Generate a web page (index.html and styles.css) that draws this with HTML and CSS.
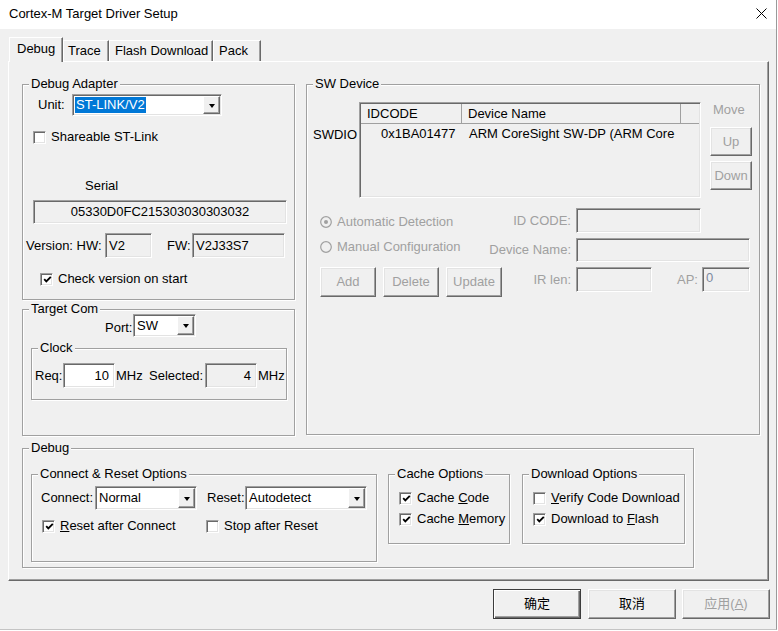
FILE: index.html
```html
<!DOCTYPE html>
<html>
<head>
<meta charset="utf-8">
<title>Cortex-M Target Driver Setup</title>
<link rel="stylesheet" href="styles.css">
</head>
<body>
<div class="window">
  <div class="titlebar">
    <span class="title">Cortex-M Target Driver Setup</span>
    <svg class="close" width="11" height="11" viewBox="0 0 11 11"><path d="M0.5 0.5L10.5 10.5M10.5 0.5L0.5 10.5" stroke="#000" stroke-width="1" fill="none"/></svg>
  </div>

  <div class="tabs">
    <div class="tab active t-debug">Debug</div>
    <div class="tab t-trace">Trace</div>
    <div class="tab t-flash">Flash Download</div>
    <div class="tab t-pack">Pack</div>
  </div>

  <div class="panel">
    <div class="top-row">
      <div class="left-col">
        <fieldset class="grp adapter">
          <legend>Debug Adapter</legend>
          <div class="unit-row">
            <span class="lbl-unit">Unit:</span>
            <div class="combo c-unit"><span class="val sel-wrap"><span class="sel">ST-LINK/V2</span></span><span class="arrow"></span></div>
          </div>
          <div class="chk share-row"><span class="box"></span><span>Shareable ST-Link</span></div>
          <div class="serial-lbl">Serial</div>
          <div class="edit serial-box">05330D0FC215303030303032</div>
          <div class="version-row">
            <span class="lbl-ver">Version: HW:</span>
            <div class="edit ver-hw">V2</div>
            <span class="lbl-fw">FW:</span>
            <div class="edit ver-fw">V2J33S7</div>
          </div>
          <div class="chk checkver-row"><span class="box"><svg width="9" height="9" viewBox="0 0 9 9"><path d="M1.2 4.2L3.3 6.3L7.8 1.8" stroke="#000" stroke-width="1.9" fill="none"/></svg></span><span>Check version on start</span></div>
        </fieldset>

        <fieldset class="grp target">
          <legend>Target Com</legend>
          <div class="port-row">
            <span class="lbl-port">Port:</span>
            <div class="combo c-port"><span class="val">SW</span><span class="arrow"></span></div>
          </div>
          <fieldset class="grp clock">
            <legend>Clock</legend>
            <div class="req-row">
              <span class="lbl-req">Req:</span>
              <div class="edit white num-box">10</div>
              <span class="mhz1">MHz</span>
              <span class="lbl-selected">Selected:</span>
              <div class="edit num-box">4</div>
              <span class="mhz2">MHz</span>
            </div>
          </fieldset>
        </fieldset>
      </div>

      <fieldset class="grp swdev">
        <legend>SW Device</legend>
        <div class="sw-top">
          <span class="swdio">SWDIO</span>
          <div class="list">
            <div class="list-head">
              <span class="hc hc-id">IDCODE</span>
              <span class="hc hc-name">Device Name</span>
              <span class="hc hc-fill"></span>
            </div>
            <div class="list-row">
              <span class="lc-id">0x1BA01477</span>
              <span class="lc-name">ARM CoreSight SW-DP (ARM Core</span>
            </div>
          </div>
          <div class="move-col">
            <span class="move-lbl">Move</span>
            <div class="btn dis b-up">Up</div>
            <div class="btn dis b-down">Down</div>
          </div>
        </div>
        <div class="sw-bottom">
          <div class="sw-left">
            <div class="radio r1"><svg width="12" height="12" viewBox="0 0 12 12"><circle cx="6" cy="6" r="5.3" fill="#f0f0f0" stroke="#a0a0a0" stroke-width="1.2"/><circle cx="6" cy="6" r="2" fill="#a0a0a0"/></svg><span>Automatic Detection</span></div>
            <div class="radio r2"><svg width="12" height="12" viewBox="0 0 12 12"><circle cx="6" cy="6" r="5.3" fill="#f0f0f0" stroke="#a0a0a0" stroke-width="1.2"/></svg><span>Manual Configuration</span></div>
            <div class="sw-btns">
              <div class="btn dis b-sm">Add</div>
              <div class="btn dis b-sm">Delete</div>
              <div class="btn dis b-sm">Update</div>
            </div>
          </div>
          <div class="sw-right">
            <div class="f-row fr1"><span class="f-lbl"><span>ID CODE:</span></span><div class="edit in-id"></div></div>
            <div class="f-row fr2"><span class="f-lbl"><span>Device Name:</span></span><div class="edit in-name"></div></div>
            <div class="f-row fr3"><span class="f-lbl"><span>IR len:</span></span><div class="edit in-ir"></div><span class="ap-lbl">AP:</span><div class="edit in-ap">0</div></div>
          </div>
        </div>
      </fieldset>
    </div>

    <fieldset class="grp debug">
      <legend>Debug</legend>
      <div class="debug-row">
        <fieldset class="grp conn">
          <legend>Connect &amp; Reset Options</legend>
          <div class="conn-row">
            <span class="lbl-connect">Connect:</span>
            <div class="combo c-connect"><span class="val">Normal</span><span class="arrow"></span></div>
            <span class="lbl-reset">Reset:</span>
            <div class="combo c-reset"><span class="val">Autodetect</span><span class="arrow"></span></div>
          </div>
          <div class="conn-chk-row">
            <div class="chk c-rac"><span class="box"><svg width="9" height="9" viewBox="0 0 9 9"><path d="M1.2 4.2L3.3 6.3L7.8 1.8" stroke="#000" stroke-width="1.9" fill="none"/></svg></span><span><u>R</u>eset after Connect</span></div>
            <div class="chk"><span class="box"></span><span>Stop after Reset</span></div>
          </div>
        </fieldset>

        <fieldset class="grp cache">
          <legend>Cache Options</legend>
          <div class="chk opt1"><span class="box"><svg width="9" height="9" viewBox="0 0 9 9"><path d="M1.2 4.2L3.3 6.3L7.8 1.8" stroke="#000" stroke-width="1.9" fill="none"/></svg></span><span>Cache <u>C</u>ode</span></div>
          <div class="chk opt2"><span class="box"><svg width="9" height="9" viewBox="0 0 9 9"><path d="M1.2 4.2L3.3 6.3L7.8 1.8" stroke="#000" stroke-width="1.9" fill="none"/></svg></span><span>Cache <u>M</u>emory</span></div>
        </fieldset>

        <fieldset class="grp download">
          <legend>Download Options</legend>
          <div class="chk opt1"><span class="box"></span><span><u>V</u>erify Code Download</span></div>
          <div class="chk opt2"><span class="box"><svg width="9" height="9" viewBox="0 0 9 9"><path d="M1.2 4.2L3.3 6.3L7.8 1.8" stroke="#000" stroke-width="1.9" fill="none"/></svg></span><span>Download to <u>F</u>lash</span></div>
        </fieldset>
      </div>
    </fieldset>
  </div>

  <div class="buttons">
    <div class="btn default dlg">确定</div>
    <div class="btn dlg">取消</div>
    <div class="btn dis dlg">应用(<u>A</u>)</div>
  </div>
</div>
</body>
</html>
```

FILE: styles.css
```css
* { box-sizing: border-box; }

body {
  margin: 0;
  background: #fff;
  font: 13px/16px "Liberation Sans", "Noto Sans CJK SC", sans-serif;
  color: #000;
}

.window {
  width: 777px;
  height: 630px;
  background: #f0f0f0;
  border-right: 1px solid #9a9a9a;
  border-bottom: 1px solid #c4c4c4;
  display: flex;
  flex-direction: column;
}

/* title bar */
.titlebar {
  height: 29px;
  flex: none;
  background: #fff;
  display: flex;
  align-items: center;
  justify-content: space-between;
  padding: 0 9px 2px 9px;
}

/* tabs */
.tabs {
  display: flex;
  align-items: flex-end;
  height: 25px;
  margin: 8px 0 -1px 9px;
  position: relative;
  z-index: 1;
  flex: none;
}
.tab {
  height: 21px;
  margin-bottom: 1px;
  border: 1px solid;
  border-bottom: 0;
  border-color: #fff #696969 transparent #fff;
  box-shadow: inset -1px 0 0 #a0a0a0;
  padding: 2px 0 0 5px;
  background: #f0f0f0;
  white-space: nowrap;
}
.tab.active { height: 25px; margin-bottom: 0; padding: 3px 0 0 7px; }
.t-debug { width: 54px; }
.t-trace { width: 46px; padding-left: 4px; }
.t-flash { width: 104px; }
.t-pack { width: 48px; }

/* tab page */
.panel {
  flex: none;
  margin-left: 8px;
  width: 761px;
  height: 520px;
  border: 1px solid;
  border-color: #fff #696969 #696969 #fff;
  box-shadow: inset -1px -1px 0 #a0a0a0;
  padding: 14px 0 0 13px;
}

/* group boxes */
.grp {
  margin: 0;
  padding: 0;
  min-width: 0;
  border: 1px solid #a0a0a0;
  box-shadow: 1px 1px 0 #fff, inset 1px 1px 0 #fff;
}
.grp > legend {
  padding: 0 2px;
  margin-left: 6px;
  line-height: 16px;
  background: #f0f0f0;
  position: relative;
}

.top-row { display: flex; align-items: flex-start; }
.left-col { width: 273px; display: flex; flex-direction: column; }

.adapter { height: 224px; }
.target { height: 135px; margin-top: 1px; }
.swdev { width: 454px; height: 359px; margin-left: 11px; }
.debug { width: 672px; height: 128px; margin-top: 4px; }

/* common controls */
.combo {
  display: flex;
  background: #fff;
  border: 1px solid;
  border-color: #a0a0a0 #fff #fff #a0a0a0;
  box-shadow: inset 1px 1px 0 #696969, inset -1px -1px 0 #e3e3e3;
  padding: 1px;
}
.combo .val {
  flex: 1;
  padding-left: 2px;
  display: flex;
  align-items: center;
  white-space: nowrap;
  overflow: hidden;
}
.combo .sel-wrap { padding-left: 1px; }
.sel { background: #0078d7; color: #fff; padding: 0 1px; }
.combo .arrow {
  width: 17px;
  flex: none;
  background: #f0f0f0;
  border: 1px solid;
  border-color: #fff #696969 #696969 #fff;
  box-shadow: inset -1px -1px 0 #a0a0a0;
  display: flex;
  align-items: center;
  justify-content: center;
}
.combo .arrow::after {
  content: "";
  border-left: 3.5px solid transparent;
  border-right: 3.5px solid transparent;
  border-top: 4px solid #000;
  margin-top: 1px;
}

.edit {
  background: #f0f0f0;
  border: 1px solid;
  border-color: #a0a0a0 #fff #fff #a0a0a0;
  box-shadow: inset 1px 1px 0 #696969, inset -1px -1px 0 #e3e3e3;
  display: flex;
  align-items: center;
  white-space: nowrap;
}
.edit.white { background: #fff; }

.chk { display: flex; align-items: center; height: 16px; gap: 5px; white-space: nowrap; }
.box {
  width: 13px;
  height: 13px;
  flex: none;
  background: #fff;
  border: 1px solid;
  border-color: #a0a0a0 #fff #fff #a0a0a0;
  box-shadow: inset 1px 1px 0 #696969, inset -1px -1px 0 #e3e3e3;
  display: flex;
  align-items: center;
  justify-content: center;
}
.box svg { display: block; margin: 1px 0 0 1px; }

.btn {
  display: flex;
  align-items: center;
  justify-content: center;
  background: #f0f0f0;
  border: 1px solid;
  border-color: #fff #696969 #696969 #fff;
  box-shadow: inset -1px -1px 0 #a0a0a0, inset 1px 1px 0 #e3e3e3;
  white-space: nowrap;
}
.btn.dis { color: #a0a0a0; }

/* Debug Adapter */
.unit-row { display: flex; align-items: center; margin-top: 2px; padding-left: 15px; }
.lbl-unit { width: 34px; }
.c-unit { width: 150px; height: 22px; }
.share-row { margin-top: 13px; padding-left: 10px; }
.serial-lbl { margin-top: 33px; padding-left: 62px; }
.serial-box { margin: 6px 0 0 10px; width: 254px; height: 24px; justify-content: center; }
.version-row { display: flex; align-items: center; margin-top: 9px; padding-left: 3px; }
.lbl-ver { width: 79px; }
.ver-hw { width: 47px; height: 25px; padding-left: 3px; }
.lbl-fw { width: 25px; margin-left: 15px; }
.ver-fw { width: 93px; height: 25px; padding-left: 3px; }
.checkver-row { margin-top: 13px; padding-left: 17px; }

/* Target Com */
.port-row { display: flex; align-items: center; margin-top: -3px; padding-left: 82px; }
.lbl-port { width: 28px; padding-top: 4px; }
.c-port { width: 63px; height: 23px; }
.clock { width: 256px; height: 60px; margin: 3px 0 0 8px; }
.req-row { display: flex; align-items: center; margin-top: 7px; padding-left: 3px; }
.lbl-req { width: 28px; }
.num-box { width: 52px; height: 25px; justify-content: flex-end; padding-right: 5px; }
.mhz1 { width: 34px; padding-left: 1px; }
.lbl-selected { width: 56px; }
.mhz2 { padding-left: 1px; }

/* SW Device */
.sw-top { display: flex; align-items: flex-start; margin-top: 10px; }
.swdio { width: 52px; padding-left: 6px; margin-top: 25px; }
.list {
  width: 342px;
  height: 96px;
  background: #f0f0f0;
  border: 1px solid;
  border-color: #a0a0a0 #fff #fff #a0a0a0;
  box-shadow: inset 1px 1px 0 #696969, inset -1px -1px 0 #e3e3e3;
  padding: 1px;
}
.list-head { display: flex; height: 20px; border-bottom: 1px solid #a0a0a0; }
.hc { line-height: 19px; border-right: 1px solid #a0a0a0; padding-left: 6px; }
.hc-id { width: 101px; }
.hc-name { width: 219px; }
.hc-fill { flex: 1; border-right: 0; }
.list-row { display: flex; margin-top: 2px; white-space: nowrap; }
.lc-id { width: 101px; padding-left: 20px; }
.lc-name { width: 219px; padding-left: 7px; overflow: hidden; }
.move-col { display: flex; flex-direction: column; width: 42px; margin-left: 9px; }
.move-lbl { color: #a0a0a0; padding-left: 3px; }
.b-up { height: 29px; margin-top: 9px; }
.b-down { height: 29px; margin-top: 5px; }

.sw-bottom { display: flex; margin-top: 10px; }
.sw-left { width: 195px; padding-left: 13px; display: flex; flex-direction: column; }
.radio { display: flex; align-items: center; gap: 5px; height: 16px; color: #a0a0a0; white-space: nowrap; }
.radio svg { display: block; }
.r1 { margin-top: 6px; }
.r2 { margin-top: 9px; }
.sw-btns { display: flex; gap: 7px; margin-top: 12px; }
.b-sm { width: 56px; height: 30px; }

.sw-right { width: 248px; display: flex; flex-direction: column; }
.f-row { display: flex; align-items: center; }
.fr2, .fr3 { margin-top: 5px; }
.f-lbl {
  width: 69px;
  flex: none;
  margin-right: 5px;
  display: flex;
  justify-content: flex-end;
  color: #a0a0a0;
  white-space: nowrap;
}
.f-lbl > span { flex: none; }
.in-id { width: 125px; height: 25px; }
.in-name { width: 174px; height: 24px; }
.in-ir { width: 76px; height: 25px; }
.ap-lbl { flex: 1; text-align: right; padding-right: 4px; color: #a0a0a0; }
.in-ap { width: 48px; height: 25px; align-items: flex-start; padding: 2px 0 0 3px; color: #7d8aa0; }

/* Debug */
.debug-row { display: flex; align-items: flex-start; margin-top: 10px; padding-left: 8px; }
.conn { width: 346px; height: 96px; }
.conn-row { display: flex; align-items: center; margin-top: 4px; padding-left: 9px; }
.lbl-connect { width: 54px; }
.c-connect { width: 102px; height: 24px; }
.lbl-reset { width: 38px; margin-left: 10px; }
.c-reset { width: 122px; height: 24px; }
.conn-chk-row { display: flex; margin-top: 8px; padding-left: 10px; }
.c-rac { width: 164px; }
.cache { width: 122px; height: 78px; margin-left: 11px; }
.download { width: 163px; height: 78px; margin-left: 12px; }
.cache .chk, .download .chk { padding-left: 10px; overflow: hidden; margin-right: 3px; }
.opt1 { margin-top: 8px; }
.opt2 { margin-top: 5px; }

/* dialog buttons */
.buttons { display: flex; justify-content: flex-end; gap: 6px; margin-top: 8px; padding-right: 6px; }
.dlg { width: 88px; height: 30px; }
.btn.default {
  border: 1px solid #3c3c3c;
  box-shadow: inset 1px 1px 0 #fff, inset -1px -1px 0 #696969, inset -2px -2px 0 #a0a0a0;
  margin-right: 1px;
}
```
